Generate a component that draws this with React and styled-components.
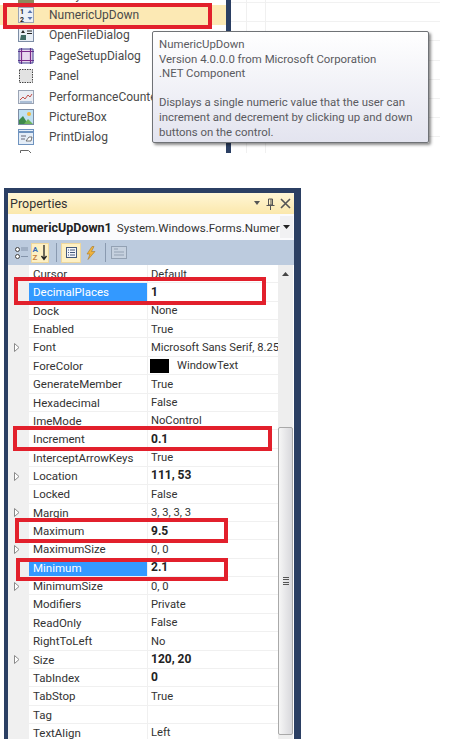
import React from 'react';
import styled, { createGlobalStyle } from 'styled-components';

const GlobalStyle = createGlobalStyle`
  html, body {
    margin: 0;
    padding: 0;
    background: #fff;
    font-family: Roboto, "Open Sans", sans-serif;
    font-size: 12px;
  }
`;

const Page = styled.div`
  position: relative;
  width: 474px;
  height: 750px;
  overflow: hidden;
`;

/* ---------- Toolbox ---------- */

const TopArea = styled.section`
  display: flex;
  height: 153px;
`;

const ToolList = styled.div`
  width: 226px;
  height: 153px;
  overflow: hidden;
  background: #fff;
`;

const ToolInner = styled.div`
  margin-top: -15.6px;
`;

const ToolRow = styled.div`
  display: flex;
  align-items: center;
  height: 20.4px;
  padding-left: 18px;
  color: #4a4a4a;
  background: ${(p) => (p.$active ? '#fce9b4' : 'transparent')};

  svg {
    flex: none;
    width: 16px;
    height: 16px;
    margin-right: 15px;
  }
`;

const Divider = styled.div`
  width: 5px;
  background: #2b3f63;
`;

const Designer = styled.div`
  width: 209px;
  background-color: #fff;
  background-image:
    linear-gradient(to right, transparent 15px, #f0f0f0 15px, #f0f0f0 16px, transparent 16px, transparent 34px, #f0f0f0 34px, #f0f0f0 35px, transparent 35px),
    repeating-linear-gradient(to bottom, #f1f1f1 0, #f1f1f1 1px, transparent 1px, transparent 19.2px);
  background-position: 0 2px;
`;

const Tooltip = styled.div`
  position: absolute;
  left: 152px;
  top: 31px;
  width: 277px;
  height: 112px;
  box-sizing: border-box;
  padding: 5px 6px;
  border: 1px solid #6f7276;
  border-radius: 2px;
  background: linear-gradient(to bottom, #ffffff, #e3e4ef);
  box-shadow: 2px 2px 3px rgba(0, 0, 0, 0.45);
  color: #5a5a60;
  font-size: 11.4px;
  line-height: 14.6px;
  white-space: nowrap;

  p {
    margin: 0 0 14.6px;
  }
`;

/* ---------- Properties window ---------- */

const Panel = styled.section`
  width: 297px;
  height: 551px;
  margin: 35px 0 0 4px;
  box-sizing: border-box;
  border: solid #2b3f63;
  border-width: 5px 7px 0 4px;
  display: flex;
  flex-direction: column;
  overflow: hidden;
`;

const TitleBar = styled.div`
  flex: none;
  display: flex;
  align-items: center;
  justify-content: space-between;
  height: 21px;
  padding: 0 3px 0 2px;
  border-radius: 2px 2px 0 0;
  background: linear-gradient(to bottom, #fff6d6, #fbe8ac);
  color: #333;
  font-size: 12.5px;

  svg {
    display: block;
  }
`;

const TitleIcons = styled.div`
  display: flex;
  align-items: center;
  gap: 5px;
`;

const ObjectRow = styled.div`
  flex: none;
  display: flex;
  align-items: center;
  justify-content: space-between;
  height: 26px;
  padding-left: 4px;
  background: #fbfbfd;
  color: #333;
  font-size: 11.6px;
  white-space: nowrap;
  overflow: hidden;

  b {
    color: #222;
    font-size: 12.5px;
    margin-right: 5px;
  }
`;

const ObjectText = styled.div`
  width: 268px;
  overflow: hidden;
`;

const ComboButton = styled.div`
  flex: none;
  display: flex;
  align-items: center;
  justify-content: center;
  width: 13px;
  height: 22px;
  margin-right: 1px;
  background: #f1f1f3;
`;

const ToolStrip = styled.div`
  flex: none;
  display: flex;
  align-items: center;
  height: 25px;
  padding-left: 5px;
  background: #bccbde;
`;

const StripButton = styled.div`
  display: flex;
  align-items: center;
  justify-content: center;
  width: ${(p) => p.$w || 18}px;
  height: 20px;
  margin-right: ${(p) => p.$gap || 0}px;
  background: ${(p) => (p.$on ? '#fdf0c4' : 'transparent')};
  box-shadow: ${(p) => (p.$on ? 'inset 0 0 0 1px #eed79c' : 'none')};
`;

const StripSep = styled.div`
  width: 1px;
  height: 19px;
  margin-right: 4px;
  background: #8a9ab0;
`;

const GridArea = styled.div`
  flex: 1;
  min-height: 0;
  display: flex;
  overflow: hidden;
  background: #fff;
`;

const RowList = styled.div`
  width: 270px;
  flex: none;
`;

const PropRow = styled.div`
  display: flex;
  height: 18.36px;
  line-height: 17.36px;
  font-size: 11.5px;
  color: #333;
  white-space: nowrap;
`;

const Gutter = styled.div`
  flex: none;
  width: 21px;
  display: flex;
  align-items: center;
  justify-content: center;
  padding-right: 3px;
  box-sizing: border-box;
  background: #f0f0f0;
`;

const NameCell = styled.div`
  flex: none;
  width: 119px;
  box-sizing: border-box;
  padding: 1px 0 0 4px;
  border-right: 1px solid #f0f0f0;
  border-bottom: 1px solid #f0f0f0;
  background: ${(p) => (p.$selected ? '#3399ff' : '#fff')};
  color: ${(p) => (p.$selected ? '#fff' : '#333')};
`;

const ValueCell = styled.div`
  flex: 1;
  display: flex;
  align-items: center;
  padding: 1px 0 0 3px;
  border-bottom: 1px solid #f0f0f0;
  font-size: ${(p) => (p.$bold ? '12px' : '11.2px')};
  font-weight: ${(p) => (p.$bold ? 700 : 400)};
  color: ${(p) => (p.$bold ? '#222' : '#333')};
  overflow: hidden;
`;

const Swatch = styled.span`
  width: 19px;
  height: 14px;
  margin: 0 8px 0 -1px;
  background: #000;
`;

const Scrollbar = styled.div`
  flex: none;
  width: 15px;
  display: flex;
  flex-direction: column;
  background: #eeeeee;
`;

const ArrowButton = styled.div`
  flex: none;
  height: 162px;
  padding-top: 7px;
  box-sizing: border-box;
  display: flex;
  justify-content: center;
`;

const Thumb = styled.div`
  flex: 1;
  display: flex;
  flex-direction: column;
  gap: 1.5px;
  align-items: center;
  justify-content: center;
  margin: 0 0 4px;
  border: 1px solid #a9a9a9;
  border-radius: 2px;
  background: linear-gradient(to right, #f6f6f6, #d8d8dc);

  i {
    width: 6px;
    height: 1px;
    background: #555;
  }
`;

const RedBox = styled.div`
  position: absolute;
  left: ${(p) => p.$x}px;
  top: ${(p) => p.$y}px;
  width: ${(p) => p.$w}px;
  height: ${(p) => p.$h}px;
  box-sizing: border-box;
  border: 4px solid #e2202c;
`;

/* ---------- Icons ---------- */

const icons = {
  NotifyIcon: (
    <svg viewBox="0 0 16 16"><rect x="0" y="0" width="16" height="16" fill="#8d8a5c" /></svg>
  ),
  NumericUpDown: (
    <svg viewBox="0 0 16 16">
      <rect x="0.5" y="0.5" width="15" height="15" fill="#eef1f6" stroke="#9aa4b5" />
      <path d="M9.5 6 12 3l2.5 3zM9.5 10l2.5 3 2.500-3z" fill="#5a78b0" />
      <text x="2" y="7" fontSize="7" fontWeight="700" fill="#222" fontFamily="Roboto">1</text>
      <text x="2" y="14.5" fontSize="7" fontWeight="700" fill="#222" fontFamily="Roboto">2</text>
    </svg>
  ),
  OpenFileDialog: (
    <svg viewBox="0 0 16 16">
      <rect x="0.5" y="1.5" width="15" height="13" fill="#e8eef6" stroke="#7d8da5" />
      <path d="M3 8h5v5H2z" fill="#3f6b66" />
      <path d="M5 3l2 3H3z" fill="#222" />
      <path d="M9 4h5M9 6.5h5" stroke="#222" />
    </svg>
  ),
  PageSetupDialog: (
    <svg viewBox="0 0 16 16">
      <rect x="1" y="1" width="14" height="14" fill="#e9d8ee" />
      <path d="M0 3.5h16M0 12.5h16M3.5 0v16M12.5 0v16" stroke="#7a2a8a" strokeWidth="1.2" />
      <path d="M1 1h14v14H1z" fill="none" stroke="#3a3f8f" />
    </svg>
  ),
  Panel: (
    <svg viewBox="0 0 16 16">
      <rect x="1.5" y="1.5" width="13" height="13" fill="#e2e2e2" stroke="#444" strokeDasharray="1.5 1" />
    </svg>
  ),
  PerformanceCounter: (
    <svg viewBox="0 0 16 16">
      <rect x="0.5" y="1.5" width="15" height="13" fill="#e9edf4" stroke="#9aa4b5" />
      <path d="M2 11l3-3 2 2 3-4 2 2 2-3" fill="none" stroke="#c2504a" />
      <path d="M2 13h12" stroke="#6d8fb8" />
    </svg>
  ),
  PictureBox: (
    <svg viewBox="0 0 16 16">
      <rect x="0.5" y="0.5" width="15" height="15" fill="#bfe0f2" stroke="#7d8da5" />
      <circle cx="11" cy="5" r="2" fill="#f3b83c" />
      <path d="M1 15V11l4-4 5 8z" fill="#3d8a4c" />
      <path d="M6 15l4-5 5 5z" fill="#6fb45c" />
    </svg>
  ),
  PrintDialog: (
    <svg viewBox="0 0 16 16">
      <rect x="0.5" y="0.5" width="15" height="15" fill="#e4edf7" stroke="#6f93bf" />
      <path d="M0 3h16" stroke="#6f93bf" strokeWidth="2" />
      <path d="M3 7h5M3 10h4" stroke="#667" />
      <path d="M8 12l3-4h3l-1 4z" fill="#fff" stroke="#555" strokeWidth="0.8" />
    </svg>
  ),
  PrintDocument: (
    <svg viewBox="0 0 16 16"><path d="M2.5.5h8l3 3v12h-11z" fill="#fff" stroke="#666" /></svg>
  ),
};

const tools = [
  { name: 'NotifyIcon', label: 'NotifyIcon' },
  { name: 'NumericUpDown', label: 'NumericUpDown', active: true },
  { name: 'OpenFileDialog', label: 'OpenFileDialog' },
  { name: 'PageSetupDialog', label: 'PageSetupDialog' },
  { name: 'Panel', label: 'Panel' },
  { name: 'PerformanceCounter', label: 'PerformanceCounter' },
  { name: 'PictureBox', label: 'PictureBox' },
  { name: 'PrintDialog', label: 'PrintDialog' },
  { name: 'PrintDocument', label: 'PrintDocument' },
];

const props = [
  { n: 'Cursor', v: 'Default' },
  { n: 'DecimalPlaces', v: '1', bold: true, selected: true },
  { n: 'Dock', v: 'None' },
  { n: 'Enabled', v: 'True' },
  { n: 'Font', v: 'Microsoft Sans Serif, 8.25', arrow: true },
  { n: 'ForeColor', v: 'WindowText', swatch: true },
  { n: 'GenerateMember', v: 'True' },
  { n: 'Hexadecimal', v: 'False' },
  { n: 'ImeMode', v: 'NoControl' },
  { n: 'Increment', v: '0.1', bold: true },
  { n: 'InterceptArrowKeys', v: 'True' },
  { n: 'Location', v: '111, 53', bold: true, arrow: true },
  { n: 'Locked', v: 'False' },
  { n: 'Margin', v: '3, 3, 3, 3', arrow: true },
  { n: 'Maximum', v: '9.5', bold: true },
  { n: 'MaximumSize', v: '0, 0', arrow: true },
  { n: 'Minimum', v: '2.1', bold: true, selected: true },
  { n: 'MinimumSize', v: '0, 0', arrow: true },
  { n: 'Modifiers', v: 'Private' },
  { n: 'ReadOnly', v: 'False' },
  { n: 'RightToLeft', v: 'No' },
  { n: 'Size', v: '120, 20', bold: true, arrow: true },
  { n: 'TabIndex', v: '0', bold: true },
  { n: 'TabStop', v: 'True' },
  { n: 'Tag', v: '' },
  { n: 'TextAlign', v: 'Left' },
];

const Expand = () => (
  <svg width="6" height="9" viewBox="0 0 6 9">
    <path d="M.5.5 5 4.5.5 8.5z" fill="#fff" stroke="#8a8a8a" />
  </svg>
);

const App = () => {
  return (
    <Page>
      <GlobalStyle />

      <TopArea>
        <ToolList>
          <ToolInner>
            {tools.map((t) => (
              <ToolRow key={t.name} $active={t.active}>
                {icons[t.name]}
                {t.label}
              </ToolRow>
            ))}
          </ToolInner>
        </ToolList>
        <Divider />
        <Designer />
      </TopArea>

      <Tooltip>
        <p>
          NumericUpDown
          <br />
          Version 4.0.0.0 from Microsoft Corporation
          <br />
          .NET Component
        </p>
        <p>
          Displays a single numeric value that the user can
          <br />
          increment and decrement by clicking up and down
          <br />
          buttons on the control.
        </p>
      </Tooltip>

      <Panel>
        <TitleBar>
          Properties
          <TitleIcons>
            <svg width="8" height="5" viewBox="0 0 8 5"><path d="M1 0h6L4 4z" fill="#555" /></svg>
            <svg width="9" height="12" viewBox="0 0 9 12"><path d="M2.5 1h4v6h-4zM0.5 7.5h8M4.500 8v4M5 1v6" fill="none" stroke="#555" /></svg>
            <svg width="11" height="11" viewBox="0 0 11 11"><path d="M1 1l9 9M10 1l-9 9" stroke="#555" strokeWidth="1.6" /></svg>
          </TitleIcons>
        </TitleBar>

        <ObjectRow>
          <ObjectText>
            <b>numericUpDown1</b>System.Windows.Forms.NumericUpDown
          </ObjectText>
          <ComboButton>
            <svg width="7" height="4" viewBox="0 0 7 4"><path d="M0 0h7L3.500 4z" fill="#222" /></svg>
          </ComboButton>
        </ObjectRow>

        <ToolStrip>
          <StripButton>
            <svg width="16" height="16" viewBox="0 0 16 16">
              <rect x="1.500" y="2.500" width="4" height="4" rx="2" fill="#fff" stroke="#444" />
              <rect x="1.500" y="9.500" width="4" height="4" rx="2" fill="#fff" stroke="#444" />
              <path d="M7 3h7M7 5h7M7 11.500h7" stroke="#8494aa" />
            </svg>
          </StripButton>
          <StripButton $on $gap={7}>
            <svg width="16" height="17" viewBox="0 0 16 17">
              <text x="0.500" y="7.500" fontSize="8" fontWeight="700" fill="#3a6db5" fontFamily="Roboto">A</text>
              <text x="0.500" y="16" fontSize="8" fontWeight="700" fill="#c9803a" fontFamily="Roboto">Z</text>
              <path d="M12 1v14M9.500 12l2.500 3.500 2.500-3.500" fill="none" stroke="#222" strokeWidth="1.300" />
            </svg>
          </StripButton>
          <StripSep />
          <StripButton $on $w={20} $gap={4}>
            <svg width="13" height="13" viewBox="0 0 13 13">
              <rect x="1.500" y="1.500" width="10" height="10" fill="#f3f6fb" stroke="#44597a" />
              <path d="M3 4h1M3 6.500h1M3 9h1M5 4h5M5 6.500h5M5 9h5" stroke="#44597a" />
            </svg>
          </StripButton>
          <StripButton $w={12} $gap={8}>
            <svg width="12" height="14" viewBox="0 0 12 14">
              <path d="M7 .5 2 8h3l-2 5.500L10 5.500H6.500L9 .5z" fill="#f0b23c" stroke="#a87a2a" strokeWidth="0.600" />
            </svg>
          </StripButton>
          <StripSep />
          <StripButton>
            <svg width="16" height="13" viewBox="0 0 16 13">
              <rect x=".5" y=".5" width="15" height="12" fill="#c6d1df" stroke="#93a1b3" />
              <path d="M3 3h4M3 6h10M3 9h10" stroke="#93a1b3" />
            </svg>
          </StripButton>
        </ToolStrip>

        <GridArea>
          <RowList>
            {props.map((p) => (
              <PropRow key={p.n}>
                <Gutter>{p.arrow && <Expand />}</Gutter>
                <NameCell $selected={p.selected}>{p.n}</NameCell>
                <ValueCell $bold={p.bold}>
                  {p.swatch && <Swatch />}
                  {p.v}
                </ValueCell>
              </PropRow>
            ))}
          </RowList>
          <Scrollbar>
            <ArrowButton>
              <svg width="7" height="4" viewBox="0 0 7 4"><path d="M0 4h7L3.500 0z" fill="#444" /></svg>
            </ArrowButton>
            <Thumb>
              <i />
              <i />
              <i />
              <i />
            </Thumb>
          </Scrollbar>
        </GridArea>
      </Panel>

      <RedBox $x={3} $y={3} $w={209} $h={26} />
      <RedBox $x={14} $y={277} $w={252} $h={28} />
      <RedBox $x={13} $y={426} $w={259} $h={25} />
      <RedBox $x={15} $y={518} $w={213} $h={25} />
      <RedBox $x={16} $y={558} $w={212} $h={23} />
    </Page>
  );
};

export default App;
